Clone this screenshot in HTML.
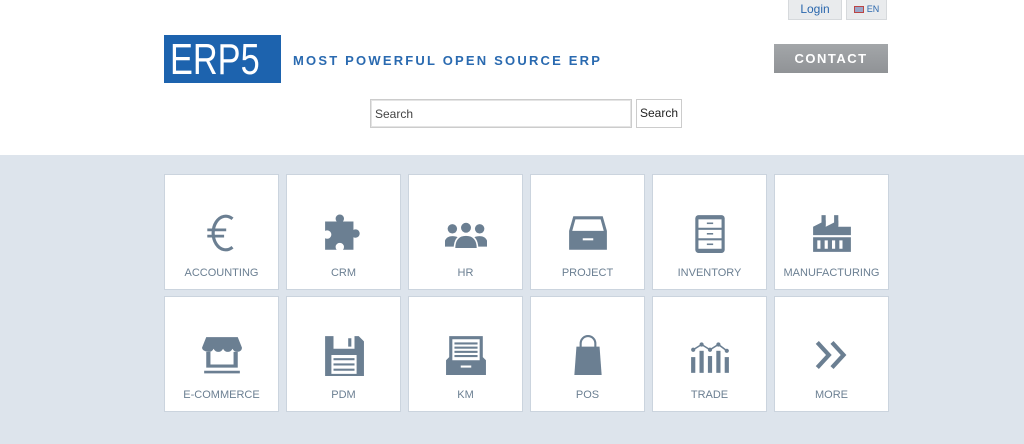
<!DOCTYPE html>
<html><head><meta charset="utf-8"><style>
*{margin:0;padding:0;box-sizing:border-box}
body{width:1024px;height:444px;background:#fff;font-family:"Liberation Sans",sans-serif;position:relative;overflow:hidden}
.top{position:absolute;top:0;height:20px;background:#e9ebed;border:1px solid #d6d9dc;border-top:none;font-size:12px;color:#2a67ad;line-height:19px;text-align:center}
.logo{position:absolute;left:164px;top:35px;width:117px;height:48px;background:#1d63ae}
.logo b{position:absolute;left:6px;top:1px;color:#fff;font-size:44px;line-height:48px;font-weight:normal;transform:scaleX(0.78);transform-origin:left}
.tag{position:absolute;left:293px;top:53px;color:#2a6ab0;font-size:13px;letter-spacing:2.2px;font-weight:bold}
.contact{position:absolute;left:774px;top:44px;width:114px;height:29px;background:linear-gradient(#a3a6a9,#909396);color:#fff;font-weight:bold;font-size:13px;letter-spacing:1.5px;text-align:center;line-height:29px}
.search{position:absolute;left:370px;top:99px;width:262px;height:29px;border:1px solid #ccc;box-shadow:inset 0 0 0 1px #e4e4e4;font-size:12px;color:#444;padding:7px 4px}
.sbtn{position:absolute;left:636px;top:99px;width:46px;height:29px;border:1px solid #ccc;font-size:12px;color:#222;text-align:center;line-height:27px}
.band{position:absolute;left:0;top:155px;width:1024px;height:289px;background:#dde4ec}
.tile{position:absolute;width:115px;height:116px;background:#fff;border:1px solid #cbd4de}
.tile svg{position:absolute;left:36px;top:37px;width:42px;height:42px}
.tile span{position:absolute;left:0;right:0;top:92px;text-align:center;font-size:11px;color:#6b7f92}
</style></head><body>
<div class="top" style="left:788px;width:54px">Login</div>
<div class="top" style="left:846px;width:41px;font-size:9px;color:#2a67ad"><span style="display:inline-block;width:10px;height:7px;background:#9aa6c8;border:1px solid #b44;vertical-align:middle;margin-right:3px"></span>EN</div>
<div class="logo"><b>ERP5</b></div>
<div class="tag">MOST POWERFUL OPEN SOURCE ERP</div>
<div class="contact">CONTACT</div>
<div class="search">Search</div>
<div class="sbtn">Search</div>
<div class="band"></div>

<div class="tile" style="left:164px;top:174px"><svg viewBox="0 0 40 40"><path d="M30 6.5A12 16 0 1 0 30 33.5" fill="none" stroke="#6b7f92" stroke-width="3"/><path d="M6 17h18M6 23h16" stroke="#6b7f92" stroke-width="2.6"/></svg><span>ACCOUNTING</span></div>
<div class="tile" style="left:286px;top:174px"><svg viewBox="0 0 40 40" fill="#6b7f92"><path d="M2 9h11a4 4 0 1 1 6 0h10v8a4 4 0 1 1 0 7v12H19a4 4 0 1 0-6 0H2V25a4 4 0 1 0 0-7z"/></svg><span>CRM</span></div>
<div class="tile" style="left:408px;top:174px"><svg viewBox="0 0 40 40" fill="#6b7f92"><circle cx="7" cy="16" r="4.5"/><circle cx="33" cy="16" r="4.5"/><path d="M-1 33c0-7 3-10 8-10s6 2 6 2v8z M41 33c0-7-3-10-8-10s-6 2-6 2v8z"/><circle cx="20" cy="15" r="5.5" stroke="#fff" stroke-width="1.5"/><path d="M9 35c0-9 4-13 11-13s11 4 11 13z" stroke="#fff" stroke-width="1.5"/></svg><span>HR</span></div>
<div class="tile" style="left:530px;top:174px"><svg viewBox="0 0 40 40" fill="#6b7f92"><path d="M6 4h28l4 14v18H2V18zM8 7l-3 11h30l-3-11z" fill-rule="evenodd"/><rect x="15" y="25" width="10" height="2" fill="#fff"/></svg><span>PROJECT</span></div>
<div class="tile" style="left:652px;top:174px"><svg viewBox="0 0 40 40" fill="#6b7f92"><rect x="6" y="3" width="28" height="36" rx="3"/><g fill="#fff"><rect x="9" y="7" width="22" height="8"/><rect x="9" y="17" width="22" height="8"/><rect x="9" y="27" width="22" height="8"/></g><g fill="#6b7f92"><rect x="17" y="10" width="6" height="1.5"/><rect x="17" y="20" width="6" height="1.5"/><rect x="17" y="30" width="6" height="1.5"/></g></svg><span>INVENTORY</span></div>
<div class="tile" style="left:774px;top:174px"><svg viewBox="0 0 40 40" fill="#6b7f92"><rect x="10" y="3" width="4" height="10"/><rect x="22" y="3" width="4" height="10"/><path d="M2 14l12-6v6l12-6v6h12v8H2z"/><path d="M2 24h36v14H2zM6 27v8h3v-8zm7 0v8h3v-8zm7 0v8h3v-8zm7 0v8h3v-8z" fill-rule="evenodd"/></svg><span>MANUFACTURING</span></div>

<div class="tile" style="left:164px;top:296px"><svg viewBox="0 0 40 40" fill="#6b7f92"><path d="M5 3h30l4 10c0 3-2.5 4-4.5 4s-3.5-1-4.5-3c-1 2-2.5 3-4.5 3s-3.5-1-4.5-3c-1 2-2.5 3-4.5 3s-3.5-1-4.5-3c-1 2-2.5 3-4.5 3S1 16 1 13z"/><path d="M5 17h4v12h22V17h4v15H5z"/><rect x="3" y="35" width="34" height="2.5"/></svg><span>E-COMMERCE</span></div>
<div class="tile" style="left:286px;top:296px"><svg viewBox="0 0 40 40" fill="#6b7f92"><path d="M2 2h32l5 5v33H2zM10 2v12h20V2zM24 4v8h3V4zM8 20v18h24V20z" fill-rule="evenodd"/><g fill="#6b7f92"><rect x="10" y="23" width="20" height="2"/><rect x="10" y="28" width="20" height="2"/><rect x="10" y="33" width="20" height="2"/></g></svg><span>PDM</span></div>
<div class="tile" style="left:408px;top:296px"><svg viewBox="0 0 40 40" fill="#6b7f92"><path d="M4 2h32v20l3 3v14H1V25l3-3z"/><rect x="7" y="5" width="26" height="20" fill="#fff"/><g fill="#6b7f92"><rect x="9" y="8" width="22" height="2"/><rect x="9" y="12" width="22" height="2"/><rect x="9" y="16" width="22" height="2"/><rect x="9" y="20" width="22" height="2"/></g><rect x="15" y="30" width="10" height="2" fill="#fff"/></svg><span>KM</span></div>
<div class="tile" style="left:530px;top:296px"><svg viewBox="0 0 40 40" fill="#6b7f92"><path d="M13 13V9a7 7 0 0 1 14 0v4" fill="none" stroke="#6b7f92" stroke-width="2"/><path d="M9 12h22l2 27H7z"/></svg><span>POS</span></div>
<div class="tile" style="left:652px;top:296px"><svg viewBox="0 0 40 40" fill="#6b7f92"><polyline points="4,15 12,10 20,15 28,10 36,16" fill="none" stroke="#6b7f92" stroke-width="1.5"/><circle cx="4" cy="15" r="2"/><circle cx="12" cy="10" r="2"/><circle cx="20" cy="15" r="2"/><circle cx="28" cy="10" r="2"/><circle cx="36" cy="16" r="2"/><rect x="2" y="22" width="4" height="15"/><rect x="10" y="16" width="4" height="21"/><rect x="18" y="21" width="4" height="16"/><rect x="26" y="16" width="4" height="21"/><rect x="34" y="22" width="4" height="15"/></svg><span>TRADE</span></div>
<div class="tile" style="left:774px;top:296px"><svg viewBox="0 0 40 40" fill="none" stroke="#6b7f92" stroke-width="4"><polyline points="6,8 17,20 6,32"/><polyline points="20,8 31,20 20,32"/></svg><span>MORE</span></div>
</body></html>
